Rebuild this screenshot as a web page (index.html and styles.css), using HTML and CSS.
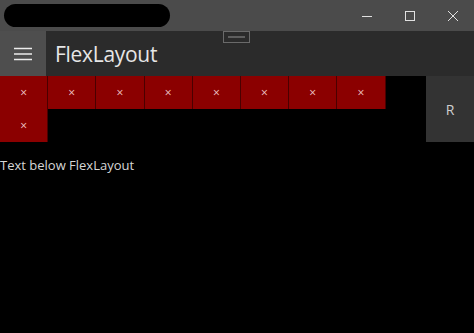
FILE: index.html
```html
<!DOCTYPE html>
<html>
<head>
    <meta charset="UTF-8">
    <meta name="viewport" content="width=device-width, initial-scale=1.0">
    <title>FlexLayout</title>
    <link rel="stylesheet" href="styles.css">
</head>
<body>
    <div class="titlebar">
        <div class="title-pill"></div>
        <div class="window-controls">
            <span class="win-btn">
                <svg width="12" height="12" viewBox="0 0 12 12"><path d="M1 6.5h10" stroke="#e0e0e0" stroke-width="1"/></svg>
            </span>
            <span class="win-btn">
                <svg width="12" height="12" viewBox="0 0 12 12"><rect x="1.5" y="1.5" width="9" height="9" fill="none" stroke="#e0e0e0" stroke-width="1"/></svg>
            </span>
            <span class="win-btn">
                <svg width="12" height="12" viewBox="0 0 12 12"><path d="M1 1L11 11M11 1L1 11" stroke="#e0e0e0" stroke-width="1"/></svg>
            </span>
        </div>
    </div>
    <div class="header">
        <button class="menu-button">
            <svg width="18" height="14" viewBox="0 0 18 14"><path d="M0 1.5h18M0 7h18M0 12.5h18" stroke="#ececec" stroke-width="1.6"/></svg>
        </button>
        <h1 class="page-title">FlexLayout</h1>
        <div class="drag-handle"><span></span></div>
    </div>
    <div class="content">
        <div class="flex-row">
            <div class="flex-items">
                <div class="flex-item">×</div>
                <div class="flex-item">×</div>
                <div class="flex-item">×</div>
                <div class="flex-item">×</div>
                <div class="flex-item">×</div>
                <div class="flex-item">×</div>
                <div class="flex-item">×</div>
                <div class="flex-item">×</div>
                <div class="flex-item">×</div>
            </div>
            <button class="r-button">R</button>
        </div>
        <p class="below-text">Text below FlexLayout</p>
    </div>
</body>
</html>
```

FILE: styles.css
```css
body {
    margin: 0;
    padding: 0;
    background-color: #000;
    font-family: "Open Sans", "Noto Sans", sans-serif;
    width: 474px;
    height: 333px;
    overflow: hidden;
}
.titlebar {
    height: 31px;
    background-color: #4b4b4b;
    display: flex;
    align-items: center;
    justify-content: space-between;
}
.title-pill {
    width: 166px;
    height: 23px;
    margin-left: 4px;
    background-color: #000;
    border-radius: 12px;
}
.window-controls {
    display: flex;
    height: 31px;
}
.win-btn {
    width: 43px;
    display: flex;
    align-items: center;
    justify-content: center;
}
.header {
    position: relative;
    height: 45px;
    background-color: #2b2b2b;
    display: flex;
    align-items: center;
}
.menu-button {
    width: 46px;
    height: 45px;
    border: none;
    padding: 0;
    background-color: #4e4e4e;
    display: flex;
    align-items: center;
    justify-content: center;
}
.page-title {
    margin: 0 0 0 9px;
    font-size: 21px;
    font-weight: normal;
    letter-spacing: -0.3px;
    color: #e6e6e6;
}
.drag-handle {
    position: absolute;
    left: 223px;
    top: 0;
    width: 25px;
    height: 10px;
    border: 1px solid #6a6a6a;
    display: flex;
    align-items: center;
    justify-content: center;
}
.drag-handle span {
    width: 17px;
    height: 2px;
    background-color: #5e5e5e;
}
.flex-row {
    display: flex;
}
.flex-items {
    flex: 1;
    display: flex;
    flex-wrap: wrap;
    align-content: flex-start;
}
.flex-item {
    box-sizing: border-box;
    width: 48.2px;
    height: 33px;
    background-color: #8b0000;
    border-right: 1px solid #4a0000;
    color: #f0c8c8;
    font-size: 12px;
    display: flex;
    align-items: center;
    justify-content: center;
}
.r-button {
    width: 48px;
    height: 66px;
    border: none;
    padding: 0;
    background-color: #333;
    color: #cfcfcf;
    font-family: "Open Sans", "Noto Sans", sans-serif;
    font-size: 14px;
}
.below-text {
    margin: 14px 0 0 0;
    font-size: 13px;
    color: #d6d6d6;
}
```
